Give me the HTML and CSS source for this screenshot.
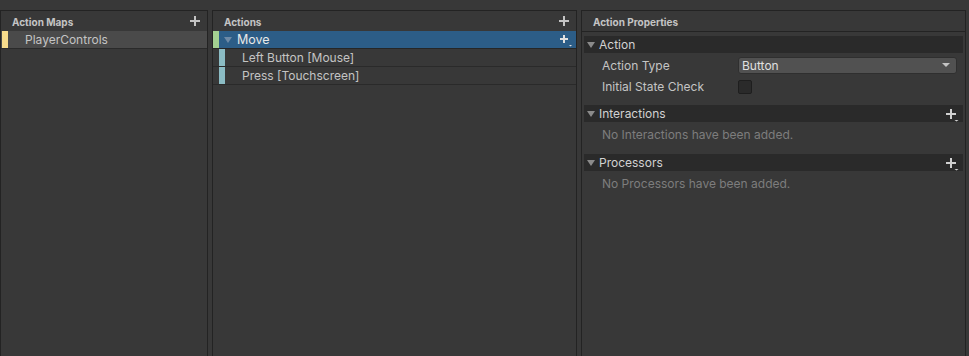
FILE: index.html
```html
<!DOCTYPE html>
<html lang="en">
<head>
  <meta charset="UTF-8" />
  <title>Input Actions</title>
  <link rel="stylesheet" href="styles.css">
</head>
<body>
  <div class="editor">
    <!-- Action maps column -->
    <div class="panel maps">
      <div class="panel-head">
        <span>Action Maps</span>
        <svg class="add" width="10" height="10" viewBox="0 0 10 10"><path d="M4 0h2v4h4v2H6v4H4V6H0V4h4z" fill="#c4c4c4"/></svg>
      </div>
      <div class="row selected-map">
        <span class="tag tag-yellow"></span>
        <span class="row-label">PlayerControls</span>
      </div>
    </div>

    <!-- Actions column -->
    <div class="panel actions">
      <div class="panel-head">
        <span>Actions</span>
        <svg class="add" width="10" height="10" viewBox="0 0 10 10"><path d="M4 0h2v4h4v2H6v4H4V6H0V4h4z" fill="#c4c4c4"/></svg>
      </div>
      <div class="row action-row">
        <span class="tag tag-green"></span>
        <svg class="fold" width="8" height="8" viewBox="0 0 8 8"><path d="M0 1h8L4 7z" fill="#6e8aa6"/></svg>
        <span class="row-label">Move</span>
        <svg class="add-drop" width="12" height="12" viewBox="0 0 12 12"><path d="M3 0h2v3h3v2H5v3H3V5H0V3h3z" fill="#e0e0e0"/><path d="M9 10h3l-1.5 1.5z" fill="#e0e0e0"/></svg>
      </div>
      <div class="row binding-row">
        <span class="tag tag-teal"></span>
        <span class="row-label">Left Button [Mouse]</span>
      </div>
      <div class="row binding-row">
        <span class="tag tag-teal"></span>
        <span class="row-label">Press [Touchscreen]</span>
      </div>
    </div>

    <!-- Properties column -->
    <div class="panel props">
      <div class="panel-head bordered">
        <span>Action Properties</span>
      </div>
      <div class="props-body">
        <div class="foldout">
          <svg class="fold" width="8" height="8" viewBox="0 0 8 8"><path d="M0 1h8L4 7z" fill="#8a8a8a"/></svg>
          <span>Action</span>
        </div>
        <div class="field">
          <span class="field-label">Action Type</span>
          <div class="dropdown">
            <span>Button</span>
            <svg width="8" height="5" viewBox="0 0 8 5"><path d="M0 0h8L4 4z" fill="#c4c4c4"/></svg>
          </div>
        </div>
        <div class="field">
          <span class="field-label">Initial State Check</span>
          <span class="checkbox"></span>
        </div>

        <div class="foldout section first">
          <svg class="fold" width="8" height="8" viewBox="0 0 8 8"><path d="M0 1h8L4 7z" fill="#8a8a8a"/></svg>
          <span>Interactions</span>
          <svg class="add-big" width="13" height="13" viewBox="0 0 13 13"><path d="M4 0h2v4h4v2H6v4H4V6H0V4h4z" fill="#d0d0d0"/><path d="M8.5 11h4l-2 1.5z" fill="#d0d0d0"/></svg>
        </div>
        <div class="empty">No Interactions have been added.</div>

        <div class="foldout section">
          <svg class="fold" width="8" height="8" viewBox="0 0 8 8"><path d="M0 1h8L4 7z" fill="#8a8a8a"/></svg>
          <span>Processors</span>
          <svg class="add-big" width="13" height="13" viewBox="0 0 13 13"><path d="M4 0h2v4h4v2H6v4H4V6H0V4h4z" fill="#d0d0d0"/><path d="M8.5 11h4l-2 1.5z" fill="#d0d0d0"/></svg>
        </div>
        <div class="empty">No Processors have been added.</div>
      </div>
    </div>
  </div>
</body>
</html>
```

FILE: styles.css
```css
/* Unity dark editor look */
body {
  margin: 0;
  background: #383838;
  font-family: Inter, 'Noto Sans', sans-serif;
  font-size: 12px;
  color: #c4c4c4;
  overflow: hidden;
}

.editor {
  display: flex;
  gap: 4px;
  padding-top: 10px;
  height: 360px;
  box-sizing: border-box;
}

.panel {
  border: 1px solid #232323;
  border-bottom: none;
  background: #383838;
  display: flex;
  flex-direction: column;
}

.maps { width: 206px; }
.actions { width: 363px; }
.props { width: 383px; }

.panel-head {
  height: 20px;
  display: flex;
  align-items: center;
  justify-content: space-between;
  padding: 1px 7px 0 11px;
  box-sizing: border-box;
  font-size: 10px;
  font-weight: 700;
}

.panel-head.bordered {
  height: 21px;
  border-bottom: 1px solid #232323;
}

.panel-head .add {
  margin-top: -2px;
}

.row {
  height: 17px;
  display: flex;
  align-items: center;
  border-bottom: 1px solid #2a2a2a;
  position: relative;
}

.tag {
  width: 6px;
  height: 17px;
  flex: none;
}

.tag-yellow { background: #f7dc8c; margin-left: 1px; }
.tag-green { background: #a3d091; }
.tag-teal { background: #8bbcc4; margin-left: 6px; }

.selected-map {
  background: #4a4a4a;
}

.selected-map .row-label {
  margin-left: 17px;
}

.action-row {
  background: #2c5d87;
  color: #e8e8e8;
  border-bottom-color: #262626;
}

.action-row .fold {
  margin-left: 5px;
}

.action-row .row-label {
  margin-left: 5px;
  font-size: 12.5px;
}

.action-row .add-drop {
  margin-left: auto;
  margin-right: 4px;
  margin-top: 3px;
}

.binding-row .row-label {
  margin-left: 17px;
}

.props-body {
  padding: 4px 2px 0 2px;
}

.foldout {
  height: 17px;
  background: #2a2a2a;
  display: flex;
  align-items: center;
  font-size: 12px;
  color: #d2d2d2;
}

.foldout .fold {
  margin-left: 3px;
  margin-right: 4px;
}

.foldout .add-big {
  margin-left: auto;
  margin-right: 4px;
  margin-top: 3px;
}

.field {
  display: flex;
  align-items: center;
  height: 17px;
  margin-top: 4px;
  padding-left: 18px;
}

.field-label {
  width: 136px;
}

.dropdown {
  width: 219px;
  height: 17px;
  box-sizing: border-box;
  background: #515151;
  border: 1px solid #2f2f2f;
  border-radius: 3px;
  display: flex;
  align-items: center;
  justify-content: space-between;
  padding: 0 6px 0 3px;
  color: #e0e0e0;
}

.checkbox {
  width: 14px;
  height: 14px;
  box-sizing: border-box;
  background: #2a2a2a;
  border: 1px solid #1e1e1e;
  border-radius: 2px;
}

.section {
  margin-top: 9px;
}

.section.first {
  margin-top: 10px;
}

.empty {
  padding-left: 18px;
  height: 21px;
  display: flex;
  align-items: center;
  color: #7d7d7d;
  margin-top: 2px;
}
```
